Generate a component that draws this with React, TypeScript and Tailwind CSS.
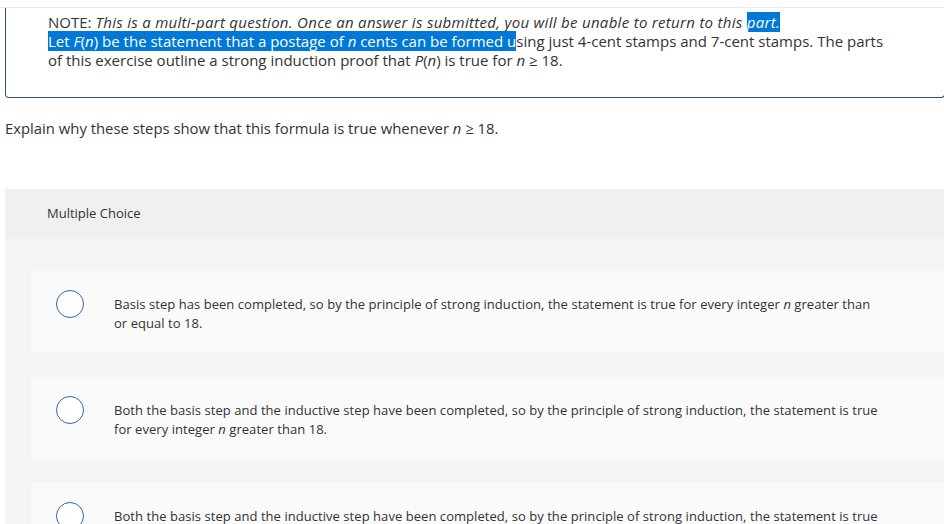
import React from "react";

const font = { fontFamily: "'Open Sans', Lato, sans-serif" };

function Radio() {
  return (
    <div className="w-[28px] h-[28px] rounded-full border-[1.5px] border-[#2f69a5] bg-white shrink-0" />
  );
}

function Option({ lines, last }: { lines: React.ReactNode[]; last?: boolean }) {
  return (
    <div className={`ml-[26px] bg-[#fafafa] flex pl-[25px] pt-[19px] pb-[19px] ${last ? "" : "mb-[25px]"}`}>
      <Radio />
      <div className="ml-[30px] pt-[5px] text-[13px] leading-[19px] text-[#333] tracking-[0.05px]">
        {lines.map((l, i) => (
          <div key={i} className="whitespace-nowrap">{l}</div>
        ))}
      </div>
    </div>
  );
}

export default function App() {
  const hl = "bg-[#0078d7] text-white";
  return (
    <div className="w-[944px] h-[524px] overflow-hidden bg-white text-[#333]" style={font}>
      <div className="h-[7px] bg-white" />
      <div className="h-px bg-[#ebebeb]" />
      <div className="ml-[5px] w-[940px] border-l border-r border-b border-[#2b5283] rounded-b-[4px] pl-[42px] pt-[5px] pb-[27px] text-[15px] leading-[19px]">
        <div className="whitespace-nowrap">
          NOTE: <i className="tracking-[0.3px]">This is a multi-part question. Once an answer is submitted, you will be unable to return to this <span className={hl}>part.</span></i>
        </div>
        <div className="whitespace-nowrap">
          <span className={hl}>
            Let <i>F</i>(<i>n</i>) be the statement that a postage of <i>n</i> cents can be formed u
          </span>
          sing just 4-cent stamps and 7-cent stamps. The parts
        </div>
        <div className="whitespace-nowrap">
          of this exercise outline a strong induction proof that <i>P</i>(<i>n</i>) is true for <i>n</i> ≥ 18.
        </div>
      </div>
      <div className="mt-[20px] ml-[5px] text-[14.85px] leading-[20px] whitespace-nowrap">
        Explain why these steps show that this formula is true whenever <i>n</i> ≥ 18.
      </div>
      <div className="mt-[51px] ml-[5px] w-[960px] bg-[#f5f5f5] pb-[40px]">
        <div className="h-[50px] bg-[#f0f0f0] flex items-center pl-[42px] text-[13px]">Multiple Choice</div>
        <div className="pt-[32px]">
          <Option
            lines={[
              <>Basis step has been completed, so by the principle of strong induction, the statement is true for every integer <i>n</i> greater than</>,
              <>or equal to 18.</>,
            ]}
          />
          <Option
            lines={[
              <>Both the basis step and the inductive step have been completed, so by the principle of strong induction, the statement is true</>,
              <>for every integer <i>n</i> greater than 18.</>,
            ]}
          />
          <Option
            last
            lines={[
              <>Both the basis step and the inductive step have been completed, so by the principle of strong induction, the statement is true</>,
              <>for every integer <i>n</i> greater than or equal to 18.</>,
            ]}
          />
        </div>
      </div>
    </div>
  );
}
